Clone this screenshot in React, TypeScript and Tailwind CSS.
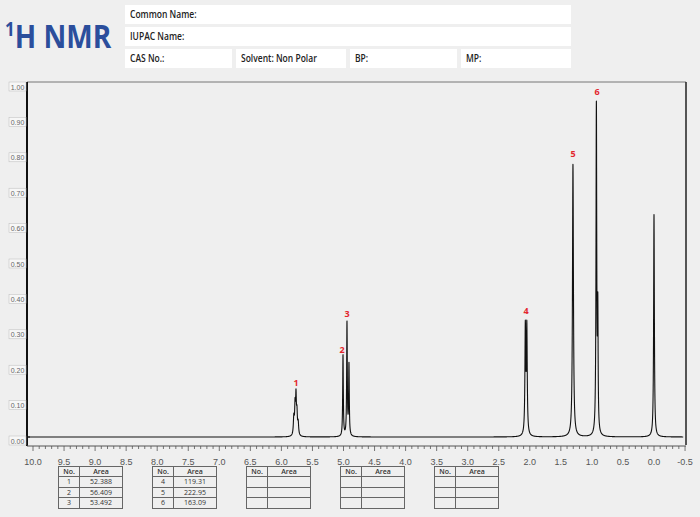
import React from "react";

const X = (p: number) => 33 + (10 - p) * 62.1;
const BASE = 437;
const S = 354;

const peaks: [number, number, number][] = [
  [5.80, 0.05, 0.009], [5.78, 0.08, 0.008], [5.765, 0.1, 0.007], [5.75, 0.06, 0.008], [5.73, 0.035, 0.009],
  [5.008, 0.23, 0.006], [4.944, 0.32, 0.006], [4.912, 0.2, 0.006],
  [2.072, 0.3, 0.008], [2.048, 0.3, 0.008],
  [1.305, 0.77, 0.009],
  [0.928, 0.93, 0.007], [0.905, 0.33, 0.006],
  [0.0, 0.63, 0.007],
];

function spectrum() {
  const pts: string[] = [];
  for (let p = 10.09; p >= -0.47; p -= 0.0008) {
    let v = 0;
    for (const [c, h, w] of peaks) v += h / (1 + ((p - c) / w) ** 2);
    pts.push(`${X(p).toFixed(2)},${(BASE - v * S).toFixed(2)}`);
  }
  return "M" + pts.join("L");
}

const labels: [string, number, number][] = [
  ["1", 296, 386], ["2", 342, 353], ["3", 347, 317], ["4", 526, 314], ["5", 573, 157], ["6", 597, 95],
];

const tables = [
  [["1", "52.388"], ["2", "56.409"], ["3", "53.492"]],
  [["4", "119.31"], ["5", "222.95"], ["6", "163.09"]],
  [["", ""], ["", ""], ["", ""]],
  [["", ""], ["", ""], ["", ""]],
  [["", ""], ["", ""], ["", ""]],
];

const cond = { fontFamily: "'Open Sans', 'Liberation Sans', sans-serif" };

export default function App() {
  const path = spectrum();
  const ticks: number[] = [];
  for (let i = 0; i <= 105; i++) ticks.push(10 - i * 0.1);
  const xl: number[] = [];
  for (let i = 0; i <= 21; i++) xl.push(10 - i * 0.5);
  return (
    <div className="w-[700px] h-[517px] bg-[#efefef] relative overflow-hidden" style={cond}>
      <div className="flex h-[78px] pt-[5px]">
        <div className="w-[125px] pl-[5px] pt-[14px]">
          <div className="text-[#2b4e9c] text-[33px] font-bold leading-none scale-x-[0.85] origin-left whitespace-nowrap">
            <span className="text-[20px] relative top-[-12px]">1</span>H NMR
          </div>
        </div>
        <div className="w-[446px] flex flex-col gap-[3px] text-[10px] font-semibold text-[#222]">
          <div className="h-[19px] bg-white flex items-center pl-[5px]"><span className="scale-x-[0.85] origin-left inline-block">Common Name:</span></div>
          <div className="h-[19px] bg-white flex items-center pl-[5px]"><span className="scale-x-[0.85] origin-left inline-block">IUPAC Name:</span></div>
          <div className="h-[19px] flex gap-[4px]">
            <div className="w-[107px] bg-white flex items-center pl-[5px]"><span className="scale-x-[0.85] origin-left inline-block">CAS No.:</span></div>
            <div className="w-[110px] bg-white flex items-center pl-[5px]"><span className="scale-x-[0.85] origin-left inline-block whitespace-nowrap">Solvent: Non Polar</span></div>
            <div className="w-[107px] bg-white flex items-center pl-[5px]"><span className="scale-x-[0.85] origin-left inline-block">BP:</span></div>
            <div className="w-[110px] bg-white flex items-center pl-[5px]"><span className="scale-x-[0.85] origin-left inline-block">MP:</span></div>
          </div>
        </div>
      </div>
      <svg width="700" height="388" viewBox="0 78 700 388" className="block">
        <line x1="27" y1="82" x2="686" y2="82" stroke="#777" strokeWidth="1" />
        <line x1="686" y1="82" x2="686" y2="445" stroke="#222" strokeWidth="1.5" />
        <line x1="27" y1="82" x2="27" y2="446" stroke="#111" strokeWidth="2" />
        <line x1="27" y1="446" x2="686" y2="446" stroke="#555" strokeWidth="1" />
        {Array.from({ length: 11 }, (_, i) => {
          const v = i / 10;
          const y = 441 - v * S;
          return (
            <g key={i}>
              <rect x="9" y={y - 5} width="17" height="9" fill="#f7f7f7" stroke="#bbb" strokeWidth="0.5" />
              <text x="17.5" y={y + 2.5} fontSize="7" fill="#666" textAnchor="middle" fontFamily="Liberation Sans, sans-serif">{v.toFixed(2)}</text>
            </g>
          );
        })}
        {ticks.map((t, i) => (
          <line key={i} x1={X(t)} y1="446" x2={X(t)} y2={i % 5 === 0 ? 451 : 449} stroke="#555" strokeWidth="0.8" />
        ))}
        {xl.map((t, i) => (
          <text key={i} x={X(t)} y="465" fontSize="9" fill="#555" textAnchor="middle" fontFamily="Liberation Sans, sans-serif">{t.toFixed(1)}</text>
        ))}
        <line x1="27" y1={BASE} x2="30" y2={BASE} stroke="#111" strokeWidth="1" />
        <path d={path} fill="none" stroke="#111" strokeWidth="1.1" strokeLinejoin="round" />
        {labels.map(([l, x, y]) => (
          <text key={l} x={x} y={y} fontSize="9" fontWeight="700" fill="#e3262d" textAnchor="middle">{l}</text>
        ))}
      </svg>
      <div className="absolute left-[58px] top-[466px] flex gap-[29px]">
        {tables.map((t, i) => (
          <table key={i} className="border-collapse w-[65px] text-[7px] leading-none text-[#333] bg-[#efefef]">
            <tbody>
              <tr className="h-[10px]">
                <td className="w-[21px] border border-[#666] text-center font-semibold">No.</td>
                <td className="border border-[#666] text-center font-semibold">Area</td>
              </tr>
              {t.map((r, j) => (
                <tr key={j} className="h-[10.5px]">
                  <td className="border border-[#666] text-center">{r[0]}</td>
                  <td className="border border-[#666] text-center">{r[1]}</td>
                </tr>
              ))}
            </tbody>
          </table>
        ))}
      </div>
    </div>
  );
}
